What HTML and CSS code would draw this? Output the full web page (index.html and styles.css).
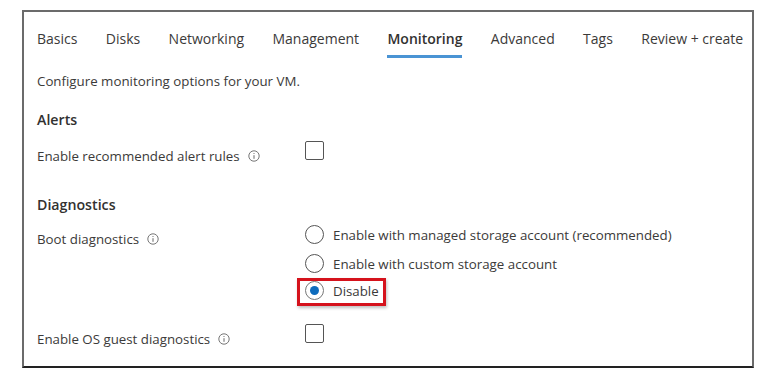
FILE: index.html
```html
<!DOCTYPE html>
<html>
<head>
<meta charset="utf-8">
<link rel="stylesheet" href="styles.css">
</head>
<body>
<div class="frame">
  <nav class="tabs">
    <span class="tab">Basics</span>
    <span class="tab">Disks</span>
    <span class="tab">Networking</span>
    <span class="tab">Management</span>
    <span class="tab active">Monitoring</span>
    <span class="tab">Advanced</span>
    <span class="tab">Tags</span>
    <span class="tab">Review + create</span>
  </nav>
  <p class="desc">Configure monitoring options for your VM.</p>

  <h2 class="section alerts">Alerts</h2>
  <div class="row row-alert">
    <div class="label">Enable recommended alert rules <svg class="info" viewBox="0 0 12 12"><circle cx="6" cy="6" r="5.2" fill="none" stroke="#666" stroke-width="0.9"/><line x1="6" y1="5.2" x2="6" y2="8.8" stroke="#666" stroke-width="1"/><circle cx="6" cy="3.5" r="0.6" fill="#666"/></svg></div>
    <div class="control"><span class="checkbox"></span></div>
  </div>

  <h2 class="section diag">Diagnostics</h2>
  <div class="row row-boot">
    <div class="label">Boot diagnostics <svg class="info" viewBox="0 0 12 12"><circle cx="6" cy="6" r="5.2" fill="none" stroke="#666" stroke-width="0.9"/><line x1="6" y1="5.2" x2="6" y2="8.8" stroke="#666" stroke-width="1"/><circle cx="6" cy="3.5" r="0.6" fill="#666"/></svg></div>
    <div class="control radios">
      <div class="option"><span class="radio"></span><span>Enable with managed storage account (recommended)</span></div>
      <div class="option"><span class="radio"></span><span>Enable with custom storage account</span></div>
      <div class="option highlight"><span class="radio checked"></span><span>Disable</span></div>
    </div>
  </div>

  <div class="row row-os">
    <div class="label">Enable OS guest diagnostics <svg class="info" viewBox="0 0 12 12"><circle cx="6" cy="6" r="5.2" fill="none" stroke="#666" stroke-width="0.9"/><line x1="6" y1="5.2" x2="6" y2="8.8" stroke="#666" stroke-width="1"/><circle cx="6" cy="3.5" r="0.6" fill="#666"/></svg></div>
    <div class="control"><span class="checkbox"></span></div>
  </div>
</div>
</body>
</html>
```
FILE: styles.css
```css
* { box-sizing: border-box; }
html, body { margin: 0; padding: 0; background: #fff; }
body {
  font-family: "Open Sans", "Noto Sans", sans-serif;
  color: #323130;
  width: 768px;
  height: 372px;
  overflow: hidden;
}
.frame {
  margin: 10px 0 0 22px;
  width: 732px;
  height: 358px;
  border: 2px solid #6b6b6b;
  border-bottom-color: #222;
  padding: 17px 0 0 13px;
}
.tabs {
  display: flex;
  gap: 28.4px;
  font-size: 14px;
  line-height: 20px;
  color: #3b3a39;
}
.tab {
  padding-bottom: 6px;
  border-bottom: 3px solid transparent;
  white-space: nowrap;
}
.tab.active {
  font-weight: 600;
  color: #323130;
  border-bottom-color: #4a94d4;
}
.desc {
  margin: 14px 0 0;
  font-size: 13.3px;
  line-height: 18px;
  color: #3b3a39;
}
.section {
  margin: 0;
  font-size: 14.2px;
  line-height: 20px;
  font-weight: 600;
  color: #323130;
}
.alerts { margin-top: 20px; }
.diag { margin-top: 30px; }
.row {
  display: grid;
  grid-template-columns: 268px 1fr;
  font-size: 13.3px;
  color: #3b3a39;
}
.row-alert { margin-top: 11px; }
.row-boot { margin-top: 10px; }
.row-os { margin-top: 24px; }
.label {
  display: flex;
  align-items: center;
  gap: 8px;
  height: 19px;
  margin-top: 5px;
  white-space: nowrap;
}
.row-boot .label { margin-top: 4px; }
.row-os .label { margin-top: 5px; }
.info { width: 12px; height: 12px; }
.checkbox {
  display: block;
  width: 19px;
  height: 19px;
  border: 1px solid #555;
  border-radius: 2px;
}
.radios { display: flex; flex-direction: column; align-items: flex-start; gap: 10px; }
.option {
  display: flex;
  align-items: center;
  gap: 9px;
  height: 19px;
  white-space: nowrap;
}
.radio {
  width: 19px;
  height: 19px;
  border: 1px solid #555;
  border-radius: 50%;
  display: flex;
  align-items: center;
  justify-content: center;
  flex: none;
}
.radio.checked { border-color: #777; }
.radio.checked::after {
  content: "";
  width: 9px;
  height: 9px;
  border-radius: 50%;
  background: #0f6cbd;
}
.highlight {
  border: 3px solid #d5121c;
  padding: 0 4px 3px 5px;
  margin-right: -7px;
  margin-bottom: -6px;
  margin-left: -8px;
  height: 28px;
  box-shadow: 1px 2px 3px rgba(0,0,0,0.25);
}
.option.highlight:nth-child(3) { margin-top: -5px; }
```
